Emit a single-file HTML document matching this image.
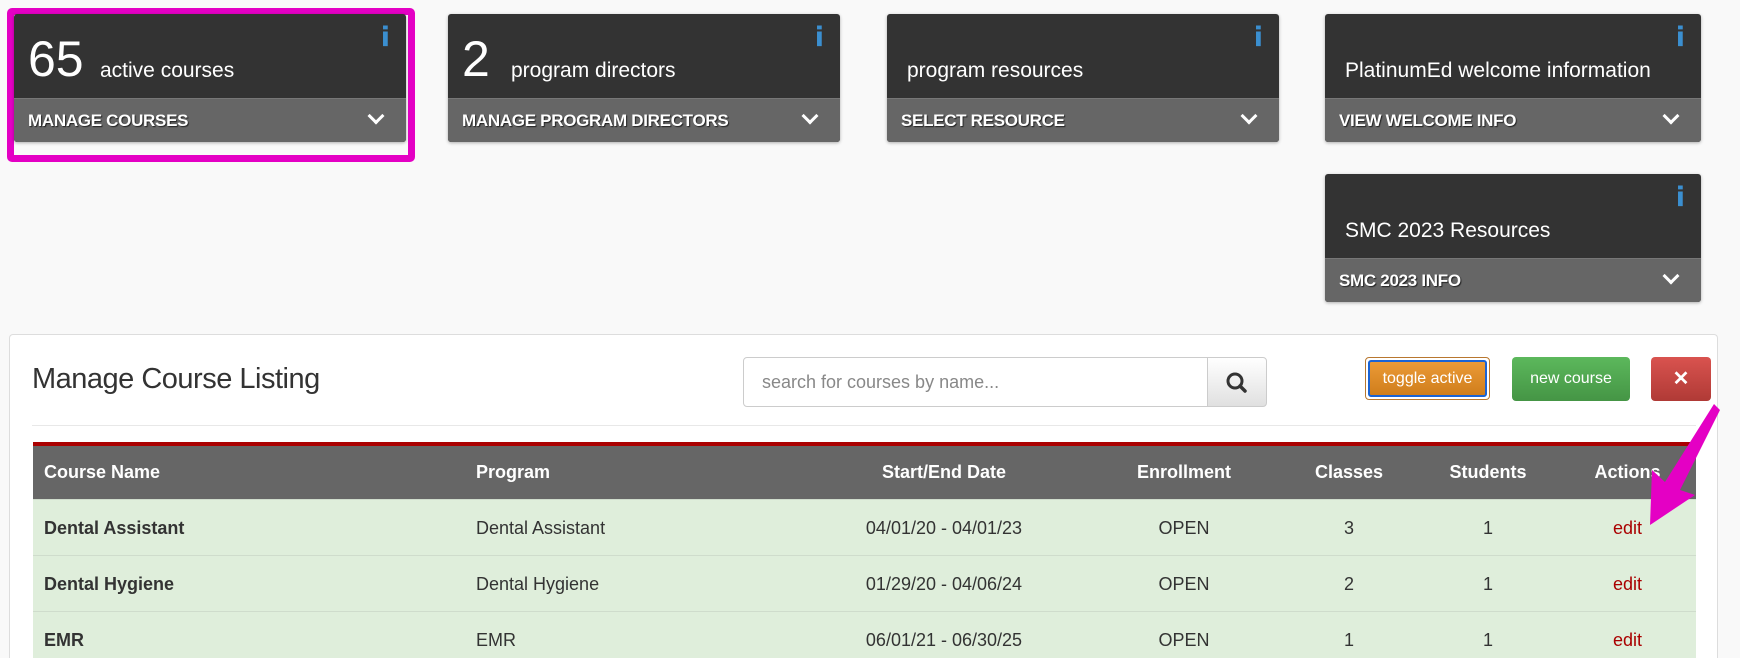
<!DOCTYPE html>
<html style="overflow:hidden;height:658px"><head><meta charset="utf-8"><style>
*{box-sizing:border-box;margin:0;padding:0}
body{width:1740px;height:658px;overflow:hidden;background:#f9f9f9;font-family:"Liberation Sans",sans-serif;position:relative;color:#333}
.card{position:absolute;width:392px;height:128px;background:#333;border-radius:3px;box-shadow:0 1px 3px rgba(0,0,0,.3);overflow:hidden}
.card .top{height:84px;position:relative;color:#fff}
.card .num{position:absolute;left:14px;top:16px;font-size:50px;line-height:58px}
.card .lbl{position:absolute;top:44px;font-size:21px;line-height:26px}
.card .info{position:absolute;right:16px;top:8px;color:#3b8fd0;font:bold 27px "DejaVu Sans",sans-serif}
.card .bot{position:absolute;left:0;right:0;bottom:0;height:44px;background:#666;border-top:1px solid #777;color:#fff;font-weight:bold;font-size:17px;line-height:44px;padding-left:14px;text-shadow:1px 1px 1px #222;letter-spacing:-.3px}
.card .chev{position:absolute;right:24px;top:11px;width:12px;height:12px;border-right:3px solid #fff;border-bottom:3px solid #fff;transform:rotate(45deg)}
.panel{position:absolute;left:9px;top:334px;width:1709px;height:324px;background:#fff;border:1px solid #ddd;border-bottom:none;border-radius:4px 4px 0 0;overflow:hidden}
table{position:absolute;left:23px;top:107px;width:1663px;border-collapse:collapse;font-size:18px;table-layout:fixed}
th{background:#666;color:#fff;height:55px;font-weight:bold;border-top:4px solid #a00;text-align:left}
td{background:#dfeedb;height:56px;border-top:1px solid #cfdccc;padding-top:2px}
.c{text-align:center}
</style></head><body>
<div style="position:absolute;left:7px;top:8px;width:408px;height:154px;border:7px solid #e400c4;border-radius:5px"></div>
<div class="card" style="left:14px;top:14px"><div class="top"><div class="num">65</div><div class="lbl" style="left:86px">active courses</div><div class="info">i</div></div><div class="bot">MANAGE COURSES<div class="chev"></div></div></div>
<div class="card" style="left:448px;top:14px"><div class="top"><div class="num">2</div><div class="lbl" style="left:63px">program directors</div><div class="info">i</div></div><div class="bot">MANAGE PROGRAM DIRECTORS<div class="chev"></div></div></div>
<div class="card" style="left:887px;top:14px"><div class="top"><div class="lbl" style="left:20px">program resources</div><div class="info">i</div></div><div class="bot">SELECT RESOURCE<div class="chev"></div></div></div>
<div class="card" style="left:1325px;top:14px;width:376px"><div class="top"><div class="lbl" style="left:20px">PlatinumEd welcome information</div><div class="info">i</div></div><div class="bot">VIEW WELCOME INFO<div class="chev"></div></div></div>
<div class="card" style="left:1325px;top:174px;width:376px"><div class="top"><div class="lbl" style="left:20px">SMC 2023 Resources</div><div class="info">i</div></div><div class="bot">SMC 2023 INFO<div class="chev"></div></div></div>
<div class="panel">
<div style="position:absolute;left:22px;top:28px;font-size:29px;color:#333;letter-spacing:-.5px">Manage Course Listing</div>
<div style="position:absolute;left:733px;top:22px;width:465px;height:50px;border:1px solid #ccc;border-radius:4px 0 0 4px;font-size:18px;color:#888;line-height:48px;padding-left:18px">search for courses by name...</div>
<div style="position:absolute;left:1197px;top:22px;width:60px;height:50px;border:1px solid #ccc;border-radius:0 4px 4px 0;background:linear-gradient(#fff,#e0e0e0)"><svg width="60" height="50"><circle cx="27" cy="23" r="7" fill="none" stroke="#333" stroke-width="3"/><line x1="32" y1="28" x2="37" y2="33" stroke="#333" stroke-width="3.5" stroke-linecap="round"/></svg></div>
<div style="position:absolute;left:1355px;top:22px;width:125px;height:43px;border:1px solid #b8772f;border-radius:4px;padding:2px"><div style="height:100%;border:2px solid #1a63d4;border-radius:3px;background:linear-gradient(#eb9a36,#d07e1c);color:#fff;font-size:16px;text-align:center;line-height:33px">toggle active</div></div>
<div style="position:absolute;left:1502px;top:22px;width:118px;height:44px;border-radius:4px;background:linear-gradient(#5cb85c,#459545);color:#fff;font-size:16px;text-align:center;line-height:44px">new course</div>
<div style="position:absolute;left:1641px;top:22px;width:60px;height:44px;border-radius:4px;background:linear-gradient(#d9534f,#b03a36);color:#fff;font-size:20px;font-weight:bold;text-align:center;line-height:44px">✕</div>
<div style="position:absolute;left:22px;top:90px;width:1664px;height:1px;background:#e8e8e8"></div>
<table>
<colgroup><col style="width:443px"><col style="width:355px"><col style="width:226px"><col style="width:254px"><col style="width:76px"><col style="width:202px"><col style="width:107px"></colgroup>
<tr><th style="padding-left:11px">Course Name</th><th>Program</th><th class="c">Start/End Date</th><th class="c">Enrollment</th><th class="c">Classes</th><th class="c">Students</th><th class="c" style="padding-right:30px">Actions</th></tr>
<tr><td style="padding-left:11px;font-weight:bold">Dental Assistant</td><td>Dental Assistant</td><td class="c">04/01/20 - 04/01/23</td><td class="c">OPEN</td><td class="c">3</td><td class="c">1</td><td class="c" style="color:#a00;padding-right:30px">edit</td></tr>
<tr><td style="padding-left:11px;font-weight:bold">Dental Hygiene</td><td>Dental Hygiene</td><td class="c">01/29/20 - 04/06/24</td><td class="c">OPEN</td><td class="c">2</td><td class="c">1</td><td class="c" style="color:#a00;padding-right:30px">edit</td></tr>
<tr><td style="padding-left:11px;font-weight:bold">EMR</td><td>EMR</td><td class="c">06/01/21 - 06/30/25</td><td class="c">OPEN</td><td class="c">1</td><td class="c">1</td><td class="c" style="color:#a00;padding-right:30px">edit</td></tr>
</table>
</div>
<svg style="position:absolute;left:0;top:0" width="1740" height="658"><polygon points="1714,404 1720,410 1680,490 1695,495 1650,525 1652,470 1665,482" fill="#e400c4"/></svg>
</body></html>
